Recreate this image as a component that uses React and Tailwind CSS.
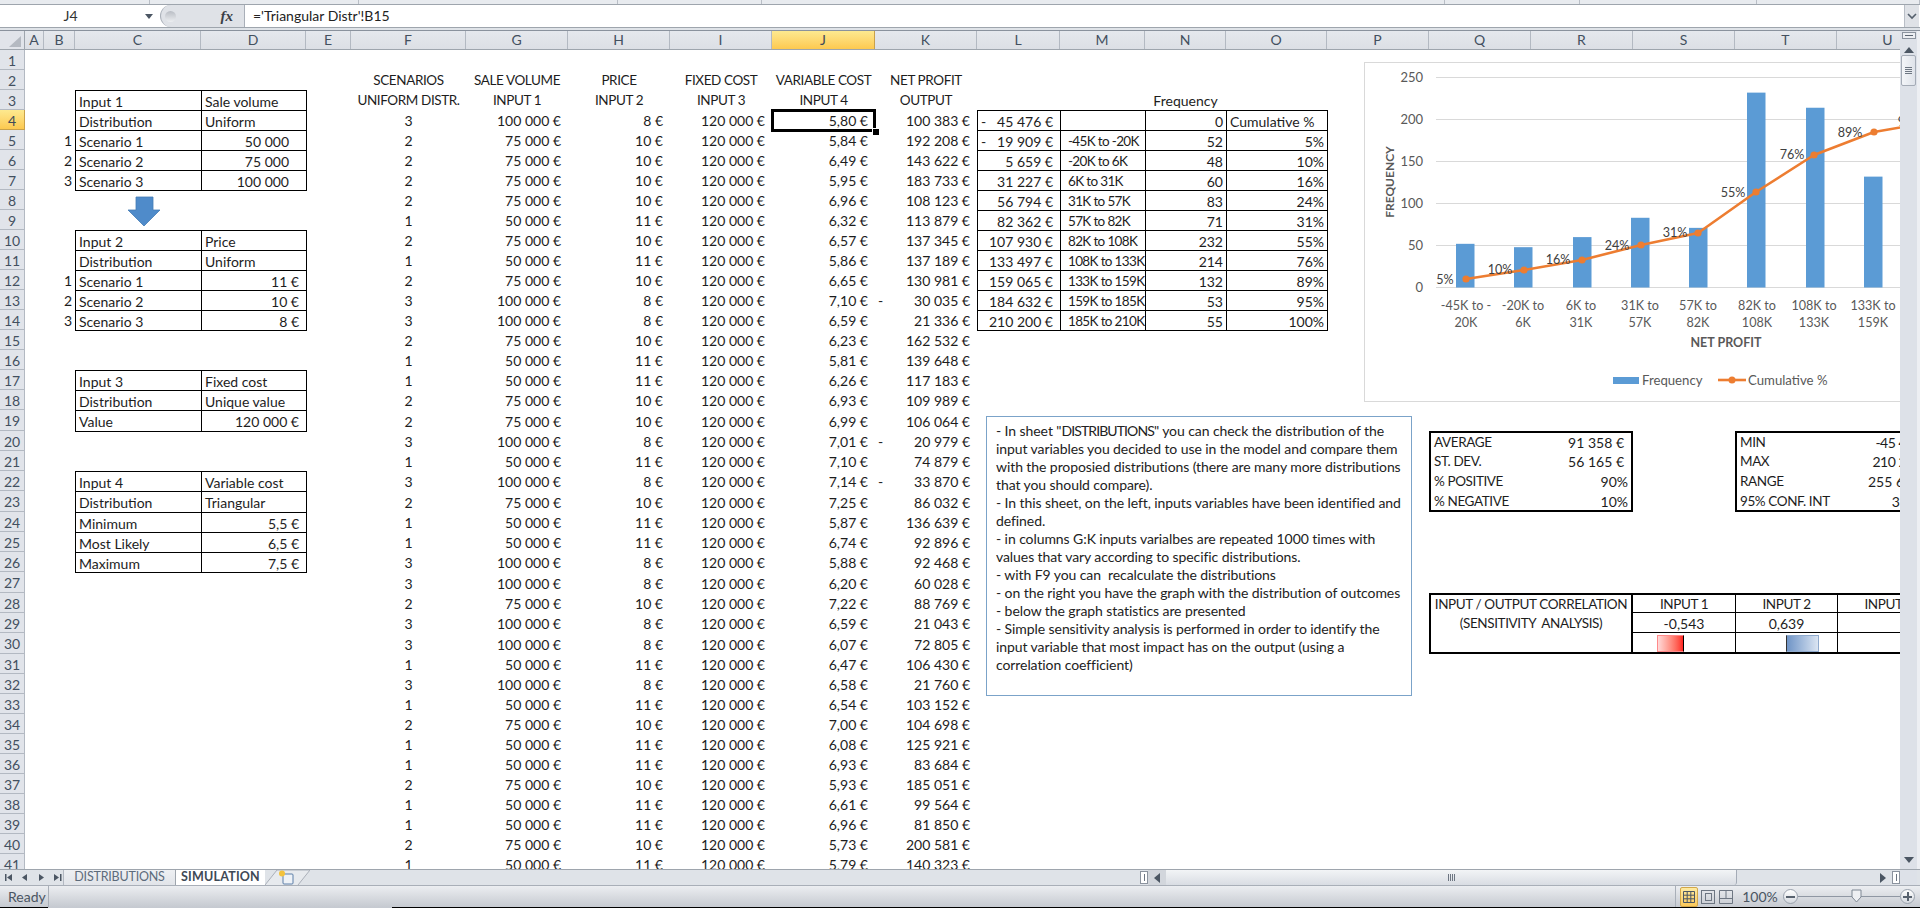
import React from "react";

const COLS = "ABCDEFGHIJKLMNOPQRSTU".split("");
const GRID =
  "grid grid-cols-[25px_19px_31px_126px_105px_45px_115px_102px_102px_102px_103px_102px_83px_85px_81px_101px_102px_102px_102px_102px_102px_102px] w-[1939px]";

const ALIGN = {
  l: "justify-start pl-[3px]",
  m8: "justify-start pl-[7px]",
  c: "justify-center",
  r: "justify-end pr-[3px]",
  m: "justify-end pr-[7px]",
  n: "justify-end pr-[17px]",
};

// Lato capitals run wider than the sheet's font
const CAPS = "text-[13.5px] tracking-[-0.4px]";

const sim = [
  [3, "5,80", "100 383"], [2, "5,84", "192 208"], [2, "6,49", "143 622"], [2, "5,95", "183 733"],
  [2, "6,96", "108 123"], [1, "6,32", "113 879"], [2, "6,57", "137 345"], [1, "5,86", "137 189"],
  [2, "6,65", "130 981"], [3, "7,10", "-30 035"], [3, "6,59", "21 336"], [2, "6,23", "162 532"],
  [1, "5,81", "139 648"], [1, "6,26", "117 183"], [2, "6,93", "109 989"], [2, "6,99", "106 064"],
  [3, "7,01", "-20 979"], [1, "7,10", "74 879"], [3, "7,14", "-33 870"], [2, "7,25", "86 032"],
  [1, "5,87", "136 639"], [1, "6,74", "92 896"], [3, "5,88", "92 468"], [3, "6,20", "60 028"],
  [2, "7,22", "88 769"], [3, "6,59", "21 043"], [3, "6,07", "72 805"], [1, "6,47", "106 430"],
  [3, "6,58", "21 760"], [1, "6,54", "103 152"], [2, "7,00", "104 698"], [1, "6,08", "125 921"],
  [1, "6,93", "83 684"], [2, "5,93", "185 051"], [1, "6,61", "99 564"], [1, "6,96", "81 850"],
  [2, "5,73", "200 581"], [1, "5,79", "140 323"],
];

const volume = { 1: "50 000 €", 2: "75 000 €", 3: "100 000 €" };
const price = { 1: "11 €", 2: "10 €", 3: "8 €" };

const sheet = {};
const put = (row, col, t, a = "l", cls = "", extra = {}) => {
  sheet[row] = sheet[row] || {};
  sheet[row][col] = { t, a, cls, ...extra };
};

// scenario tables on the left
const inputTable = (top, rows) => {
  rows.forEach(([c, d, a], i) => {
    const last = i === rows.length - 1;
    const bottom = last ? " border-b -mb-px" : "";
    put(top + i, "C", c, "l", "border-t border-l border-black" + bottom);
    put(top + i, "D", d, a || "l", "border-t border-l border-r -mr-px border-black" + bottom);
  });
};
inputTable(3, [["Input 1", "Sale volume"], ["Distribution", "Uniform"], ["Scenario 1", "50 000", "n"], ["Scenario 2", "75 000", "n"], ["Scenario 3", "100 000", "n"]]);
inputTable(10, [["Input 2", "Price"], ["Distribution", "Uniform"], ["Scenario 1", "11 €", "m"], ["Scenario 2", "10 €", "m"], ["Scenario 3", "8 €", "m"]]);
inputTable(17, [["Input 3", "Fixed cost"], ["Distribution", "Unique value"], ["Value", "120 000 €", "m"]]);
inputTable(22, [["Input 4", "Variable cost"], ["Distribution", "Triangular"], ["Minimum", "5,5 €", "m"], ["Most Likely", "6,5 €", "m"], ["Maximum", "7,5 €", "m"]]);
[5, 12].forEach((r) => [1, 2, 3].forEach((n, i) => put(r + i, "B", String(n), "r")));

// simulation columns
[["F", "SCENARIOS", "UNIFORM DISTR."], ["G", "SALE VOLUME", "INPUT 1"], ["H", "PRICE", "INPUT 2"], ["I", "FIXED COST", "INPUT 3"], ["J", "VARIABLE COST", "INPUT 4"], ["K", "NET PROFIT", "OUTPUT"]].forEach(([col, a, b]) => {
  put(2, col, a, "c", CAPS);
  put(3, col, b, "c", CAPS);
});
sim.forEach(([s, v, p], i) => {
  const r = 4 + i;
  const neg = p[0] === "-";
  put(r, "F", String(s), "c");
  put(r, "G", volume[s], "m");
  put(r, "H", price[s], "m");
  put(r, "I", "120 000 €", "m");
  put(r, "J", v + " €", "m");
  put(r, "K", (neg ? p.slice(1) : p) + " €", "m", "", { neg });
});

// frequency table
put(3, "N", "Frequency", "c");
const bins = ["-45 476", "-19 909", "5 659", "31 227", "56 794", "82 362", "107 930", "133 497", "159 065", "184 632", "210 200"];
const ranges = ["", "-45K to -20K", "-20K to 6K", "6K to 31K", "31K to 57K", "57K to 82K", "82K to 108K", "108K to 133K", "133K to 159K", "159K to 185K", "185K to 210K"];
const freq = [0, 52, 48, 60, 83, 71, 232, 214, 132, 53, 55];
const cum = ["Cumulative %", "5%", "10%", "16%", "24%", "31%", "55%", "76%", "89%", "95%", "100%"];
bins.forEach((b, i) => {
  const r = 4 + i;
  const neg = b[0] === "-";
  const bottom = i === 10 ? " border-b -mb-px" : "";
  const base = "border-t border-l border-black" + bottom;
  put(r, "L", (neg ? b.slice(1) : b) + " €", "m", base, { neg });
  put(r, "M", ranges[i], "m8", base + " text-[13.5px] tracking-[-0.65px]");
  put(r, "N", String(freq[i]), "r", base);
  put(r, "O", cum[i], i === 0 ? "l" : "r", base + " border-r -mr-px");
});

// statistics boxes
const statBox = (col1, col2, rows, closed) => {
  rows.forEach(([a, b, al, tight], i) => {
    const edge = (i === 0 ? " border-t-2" : "") + (i === rows.length - 1 ? " border-b-2" : "") + " border-black";
    put(20 + i, col1, a, "l", "border-l-2 " + CAPS + edge);
    put(20 + i, col2, b, al || "m", (closed ? "border-r-2" : "") + edge + (tight ? " tracking-[-0.5px]" : ""));
  });
};
statBox("Q", "R", [["AVERAGE", "91 358 €"], ["ST. DEV.", "56 165 €"], ["% POSITIVE", "90%", "r"], ["% NEGATIVE", "10%", "r"]], true);
statBox("T", "U", [["MIN", "-45 476 €", "m", true], ["MAX", "210 200 €", "m", true], ["RANGE", "255 676 €"], ["95% CONF. INT", "3 481 €", "r", true]], false);

// correlation table
put(28, "Q", "INPUT / OUTPUT CORRELATION", "c", "border-t-2 border-l-2 border-r-2 border-black " + CAPS, { span: true });
put(29, "Q", "(SENSITIVITY  ANALYSIS)", "c", "border-l-2 border-r-2 border-black whitespace-pre " + CAPS, { span: true });
put(30, "Q", "", "c", "border-l-2 border-r-2 border-b-2 border-black", { span: true });
[["S", "INPUT 1", "-0,543"], ["T", "INPUT 2", "0,639"], ["U", "INPUT 3", ""]].forEach(([col, a, b]) => {
  const side = col === "S" ? "" : " border-l";
  put(28, col, a, "c", "border-t-2 border-b border-black " + CAPS + side);
  put(29, col, b, "c", "border-b border-black" + side);
  put(30, col, "", "c", "border-b-2 border-black" + side);
});

const Cell = ({ cell }) => {
  if (!cell) return <div />;
  return (
    <div className={`flex items-center pt-[2px] min-w-0 overflow-hidden whitespace-nowrap ${ALIGN[cell.a]} ${cell.cls} ${cell.span ? "col-span-2" : ""}`}>
      {cell.neg && <span className="mr-auto pl-[3px]">-</span>}
      <span>{cell.t}</span>
    </div>
  );
};

const rowHeight = (n) => ([19, 23, 27, 30].includes(n) ? "h-[21px]" : "h-5");

const SheetRow = ({ n }) => {
  const cells = sheet[n] || {};
  const active = n === 4;
  return (
    <div className={`${GRID} ${rowHeight(n)}`}>
      <div
        className={`flex items-center justify-center pt-[2px] border-r border-b ${
          active
            ? "bg-linear-to-b from-[#fde98f] to-[#fdc94f] border-[#c9a14a] text-[#404a58]"
            : "bg-[#e1e4ea] border-[#b3b9c2] text-[#43505f]"
        }`}
      >
        {n}
      </div>
      {COLS.map((c) => {
        const cell = cells[c];
        if (c === "R" && cell === undefined && n >= 28 && n <= 30) return null;
        return <Cell key={c} cell={cell} />;
      })}
    </div>
  );
};

const ColumnHeader = () => (
  <div className={`${GRID} h-[19px] border-b border-[#9ea5ad]`}>
    <div className="relative bg-[#e1e4ea] border-r border-[#9ea5ad]">
      <svg width="24" height="18" className="block">
        <polygon points="21,5 21,16 9,16" fill="#b4b9c1" />
      </svg>
    </div>
    {COLS.map((c) => (
      <div
        key={c}
        className={`flex items-center justify-center border-r ${
          c === "J"
            ? "bg-linear-to-b from-[#fde98f] to-[#fdc94f] border-[#c9a14a] text-[#404a58]"
            : "bg-linear-to-b from-[#e5e8ed] to-[#dcdfe5] border-[#b3b9c2] text-[#43505f]"
        }`}
      >
        {c}
      </div>
    ))}
  </div>
);

const barData = [52, 48, 60, 83, 71, 232, 214, 132];
const barLeft = [1456, 1514, 1573, 1631, 1689, 1747, 1806, 1864];
const linePts = [[1466, 279], [1524, 270], [1582, 260], [1641, 245], [1698, 233], [1756, 192], [1814, 155], [1874, 132], [1932, 122]];
const lineLabels = [["5%", 1445, 279], ["10%", 1500, 269], ["16%", 1558, 259], ["24%", 1617, 245], ["31%", 1675, 232], ["55%", 1733, 192], ["76%", 1792, 154], ["89%", 1850, 132], ["95%", 1910, 121]];
const xLabels = [["-45K to -", "20K", 1466], ["-20K to", "6K", 1523], ["6K to", "31K", 1581], ["31K to", "57K", 1640], ["57K to", "82K", 1698], ["82K to", "108K", 1757], ["108K to", "133K", 1814], ["133K to", "159K", 1873]];

const Chart = () => (
  <div className="absolute left-[1364px] top-[31px] w-[560px] h-[340px] bg-white border border-[#d9d9d9]">
    <svg width="558" height="338" viewBox="1365 63 558 338" className="block text-[13px]">
      {[250, 200, 150, 100, 50, 0].map((v, i) => (
        <g key={v}>
          <line x1="1436" x2="1923" y1={77.5 + i * 42} y2={77.5 + i * 42} stroke="#d9d9d9" />
          <text x="1423" y={82 + i * 42} textAnchor="end" fill="#595959">{v}</text>
        </g>
      ))}
      <text transform="translate(1394 182) rotate(-90)" textAnchor="middle" fill="#595959" fontWeight="700" fontSize="12">FREQUENCY</text>
      {barData.map((v, i) => (
        <rect key={i} x={barLeft[i]} y={287.5 - v * 0.84} width="18.5" height={v * 0.84} fill="#5b9bd5" />
      ))}
      <polyline points={linePts.map((p) => p.join(",")).join(" ")} fill="none" stroke="#ed7d31" strokeWidth="2.6" strokeLinejoin="round" />
      {linePts.map(([x, y]) => (
        <circle key={x} cx={x} cy={y} r="3.6" fill="#ed7d31" />
      ))}
      {lineLabels.map(([t, x, y]) => (
        <text key={t} x={x} y={y + 5} textAnchor="middle" fill="#404040" fontSize="12.6">{t}</text>
      ))}
      {xLabels.map(([a, b, x]) => (
        <g key={a} fill="#595959" textAnchor="middle" fontSize="12.6">
          <text x={x} y="310">{a}</text>
          <text x={x} y="327">{b}</text>
        </g>
      ))}
      <text x="1726" y="347" textAnchor="middle" fill="#595959" fontWeight="700" fontSize="12.5">NET PROFIT</text>
      <rect x="1613" y="377" width="26" height="7" fill="#5b9bd5" />
      <text x="1642" y="385" fill="#595959" fontSize="13.2">Frequency</text>
      <line x1="1718" x2="1746" y1="380" y2="380" stroke="#ed7d31" strokeWidth="2.6" />
      <circle cx="1732" cy="380" r="3.5" fill="#ed7d31" />
      <text x="1748" y="385" fill="#595959" fontSize="13.2">Cumulative %</text>
    </svg>
  </div>
);

const note = [
  <>- In sheet "<span className="tracking-[-0.9px]">DISTRIBUTIONS</span>" you can check the distribution of the</>,
  "input variables you decided to use in the model and compare them",
  "with the proposied distributions (there are many more distributions",
  "that you should compare).",
  "- In this sheet, on the left, inputs variables have been identified and",
  "defined.",
  "- in columns G:K inputs varialbes are repeated 1000 times with",
  "values that vary according to specific distributions.",
  "- with F9 you can  recalculate the distributions",
  "- on the right you have the graph with the distribution of outcomes",
  "- below the graph statistics are presented",
  "- Simple sensitivity analysis is performed in order to identify the",
  "input variable that most impact has on the output (using a",
  "correlation coefficient)",
];

const NoteBox = () => (
  <div className="absolute left-[986px] top-[385px] w-[426px] h-[280px] bg-white border border-[#7ba3c9] pl-[9px] pt-[5px] text-[#222]">
    {note.map((line, i) => (
      <div key={i} className="h-[18px] leading-[18px] whitespace-pre text-[14px] tracking-[-0.08px]">{line}</div>
    ))}
  </div>
);

const DownArrow = () => (
  <svg width="34" height="31" className="absolute left-[127px] top-[165px]">
    <polygon points="9,1 26,1 26,14 33,14 17,30 1,14 9,14" fill="#4f8bca" stroke="#447bb4" strokeWidth="0.8" />
  </svg>
);

const Triangle = ({ d, className = "" }) => (
  <svg width="9" height="9" viewBox="0 0 9 9" className={className}>
    <path d={d} fill="#4b5663" />
  </svg>
);

const stripCells = [
  "w-[150px] border-r border-[#b9bec6]",
  "w-[209px] border-r border-[#b9bec6]",
  "w-[259px] border-r border-[#b9bec6]",
  "w-[144px] border-r border-[#b9bec6]",
  "w-[683px] border-r border-[#b9bec6]",
  "w-[135px] border-r border-[#b9bec6]",
  "w-[177px] border-r border-[#b9bec6]",
  "w-[163px] border-r border-[#b9bec6]",
];

const TopStrip = () => (
  <div className="flex h-[5px] bg-[#e8ebef] border-b border-[#9ea5ad]">
    {stripCells.map((cls, i) => (
      <div key={i} className={cls} />
    ))}
  </div>
);

const FormulaBar = () => (
  <div className="flex h-[22px] bg-white">
    <div className="flex items-center w-[160px] relative">
      <span className="w-[141px] text-center text-[#333]">J4</span>
      <Triangle d="M0 2h8L4 7z" className="ml-[4px]" />
    </div>
    <div className="flex items-center w-[85px] bg-[#dfe2e7] rounded-l-[14px] border-l border-[#a9afb8] border-r border-r-[#a9afb8]">
      <div className="w-[11px] h-[11px] ml-[4px] rounded-full bg-linear-to-b from-[#b9bdc4] to-[#eceef1]" />
      <span className="ml-auto mr-[11px] font-['Liberation_Serif',serif] italic font-bold text-[15px] text-[#3a3f46]">fx</span>
    </div>
    <div className="flex-1 flex items-center pl-[8px] text-[#222] text-[14px]">='Triangular Distr'!B15</div>
    <div className="w-[15px] mr-px bg-[#dfe2e7] flex items-center justify-center border-l border-[#b9bec6]">
      <svg width="10" height="7"><path d="M1 1l4 4 4-4" stroke="#55606d" strokeWidth="1.6" fill="none" /></svg>
    </div>
  </div>
);

const Grip = () => <div className="w-[7px] h-px bg-[#6d7682]" />;
const GripV = () => <div className="w-px h-[7px] bg-[#6d7682]" />;

const VScroll = () => (
  <div className="w-5 bg-[#edeff3] flex flex-col">
    <div className="w-[17px] flex-1 bg-[#dde1e8] flex flex-col items-center">
      <div className="w-[14px] h-[7px] mt-px bg-[#eceef2] border border-[#8b939e] flex items-center justify-center">
        <div className="w-[8px] h-px bg-[#5b6572]" />
      </div>
      <svg width="10" height="6" className="mt-[8px]"><path d="M5 0l5 6H0z" fill="#4b5663" /></svg>
      <div className="w-[15px] h-[31px] mt-[2px] bg-linear-to-r from-[#f3f5f8] to-[#dfe3ea] border border-[#a4abb6] rounded-[2px] flex flex-col items-center justify-center gap-px">
        <Grip />
        <Grip />
        <Grip />
        <Grip />
      </div>
      <svg width="10" height="6" className="mt-auto mb-[6px]"><path d="M0 0h10L5 6z" fill="#4b5663" /></svg>
    </div>
  </div>
);

const TabBar = () => (
  <div className="flex h-4 bg-[#dfe3e8] border-t border-[#9ea5ad] text-[12.5px] leading-none">
    <div className="w-[63px] flex items-center pl-[5px] gap-[7px] shrink-0">
      <Triangle d="M0 1h1.5v7H0zM7 1v7L2 4.5z" />
      <Triangle d="M6 1v7L1 4.5z" />
      <Triangle d="M2 1v7l5-3.5z" />
      <Triangle d="M1 1v7l5-3.5zM7 1h1.5v7H7z" />
    </div>
    <div className="w-[112px] flex items-center justify-center bg-linear-to-b from-[#eef0f3] to-[#e1e4e9] border-l border-[#b3b9c2] text-[#5d6b7b] shrink-0 tracking-[-0.2px]">DISTRIBUTIONS</div>
    <div className="w-[90px] flex items-center justify-center bg-white font-bold text-[#3e4955] shrink-0 border-l border-[#9ea5ad] tracking-[0.2px]">SIMULATION</div>
    <div className="w-[45px] flex items-center justify-center shrink-0">
      <svg width="45" height="15" viewBox="0 0 45 15">
        <path d="M0 15L12 0h33L33 15" fill="#e7eaee" stroke="#aab0b9" />
        <rect x="18" y="4" width="10" height="10" rx="1" fill="#eef2f7" stroke="#5c7fa8" />
        <circle cx="17" cy="3.5" r="3" fill="#f3c23c" />
      </svg>
    </div>
    <div className="w-[830px] shrink-0" />
    <div className="w-[8px] h-[13px] mt-px bg-white border border-[#8b939e] flex items-center justify-center shrink-0">
      <div className="w-px h-[7px] bg-[#6d7682]" />
    </div>
    <div className="w-[18px] flex items-center justify-center shrink-0 bg-[#d2d6dc]">
      <svg width="6" height="10"><path d="M6 0v10L0 5z" fill="#4b5663" /></svg>
    </div>
    <div className="w-[571px] shrink-0 flex items-center justify-center bg-linear-to-b from-[#f2f4f6] to-[#d9dde3] border-r border-[#a4abb6] rounded-br-[3px]">
      <div className="flex gap-px">
        <GripV />
        <GripV />
        <GripV />
        <GripV />
      </div>
    </div>
    <div className="w-[143px] shrink-0" />
    <div className="w-[12px] shrink-0 flex items-center">
      <svg width="6" height="10"><path d="M0 0v10l6-5z" fill="#4b5663" /></svg>
    </div>
    <div className="w-[8px] h-[13px] mt-px bg-white border border-[#8b939e] flex items-center justify-center shrink-0">
      <div className="w-px h-[7px] bg-[#6d7682]" />
    </div>
    <div className="w-[17px] shrink-0 bg-[#dde1e8]" />
  </div>
);

const ZoomBtn = ({ plus }) => (
  <div className="w-[15px] h-[15px] rounded-full border border-[#9aa2ad] bg-linear-to-b from-white to-[#d5d9df] flex items-center justify-center relative">
    <div className="w-[9px] h-[2px] bg-[#58626e]" />
    {plus && <div className="absolute w-[2px] h-[9px] bg-[#58626e]" />}
  </div>
);

const StatusBar = () => (
  <div className="flex flex-col h-[23px]">
    <div className="flex-1 flex items-center bg-linear-to-b from-[#eceef1] to-[#c6cad1] border-t border-[#a9afb8] text-[14px] text-[#4a5562]">
      <div className="w-[49px] h-full flex items-center pl-[8px] border-r border-[#a9afb8] shrink-0">Ready</div>
      <div className="flex-1" />
      <div className="h-full border-l border-[#a9afb8] pl-[4px] flex items-center gap-[3px]">
        <div className="w-[18px] h-[20px] rounded-[2px] bg-linear-to-b from-[#fdeaa0] to-[#fbc95a] border border-[#d2a74a] flex items-center justify-center">
          <svg width="12" height="12"><path d="M.5.5h11v11H.5zM4.2.5v11M7.8.5v11M.5 4.2h11M.5 7.8h11" stroke="#4b5663" fill="none" /></svg>
        </div>
        <div className="w-[14px] h-[14px] border border-[#6d7682] flex items-center justify-center"><div className="w-[7px] h-[8px] border border-[#6d7682]" /></div>
        <svg width="16" height="14" className="ml-[1px]"><path d="M.5.5h13v13H.5zM7 .5v8M.5 8.5h13" stroke="#6d7682" fill="none" /></svg>
      </div>
      <span className="w-[40px] ml-[5px] text-center">100%</span>
      <div className="ml-[3px]"><ZoomBtn /></div>
      <div className="w-[102px] h-px bg-[#8f97a3] relative">
        <svg width="12" height="14" className="absolute left-[53px] -top-[7px]">
          <path d="M1 1h9v7l-4.5 5L1 8z" fill="#eef0f3" stroke="#7f8894" />
        </svg>
      </div>
      <ZoomBtn plus />
      <div className="w-[5px]" />
    </div>
    <div className="flex h-px shrink-0">
      <div className="w-12 bg-black" />
      <div className="w-[344px] bg-[#c6cad1]" />
      <div className="flex-1 bg-black" />
    </div>
  </div>
);

const DataBars = () => (
  <>
    <div className="absolute left-[1657px] top-[604px] w-[27px] h-[17px] bg-linear-to-r from-[#ffd9d9] to-[#ff1f1f] border border-[#ff8a8a] border-r-black" />
    <div className="absolute left-[1786px] top-[604px] w-[33px] h-[17px] bg-linear-to-r from-[#6f94c6] to-[#dbe5f2] border border-[#8faacd] border-l-[#333]" />
  </>
);

export default function App() {
  const rows = Array.from({ length: 41 }, (_, i) => i + 1);
  return (
    <div className="w-[1920px] h-[908px] overflow-hidden flex flex-col bg-white font-['Lato',sans-serif] text-[14px] leading-none text-[#1d1d1d]">
      <TopStrip />
      <FormulaBar />
      <div className="h-[4px] bg-[#dfe3e8] border-t border-[#9ea5ad] border-b border-b-[#8a929d]" />
      <div className="flex h-[838px]">
        <div className="relative w-[1900px] overflow-hidden">
          <ColumnHeader />
          {rows.map((n) => (
            <SheetRow key={n} n={n} />
          ))}
          <DownArrow />
          <Chart />
          <NoteBox />
          <DataBars />
          <div className="absolute left-[771px] top-[78px] w-[105px] h-[23px] border-[3px] border-black" />
          <div className="absolute left-[872px] top-[97px] w-[6px] h-[6px] bg-black border border-white box-content" />
        </div>
        <VScroll />
      </div>
      <TabBar />
      <StatusBar />
    </div>
  );
}
